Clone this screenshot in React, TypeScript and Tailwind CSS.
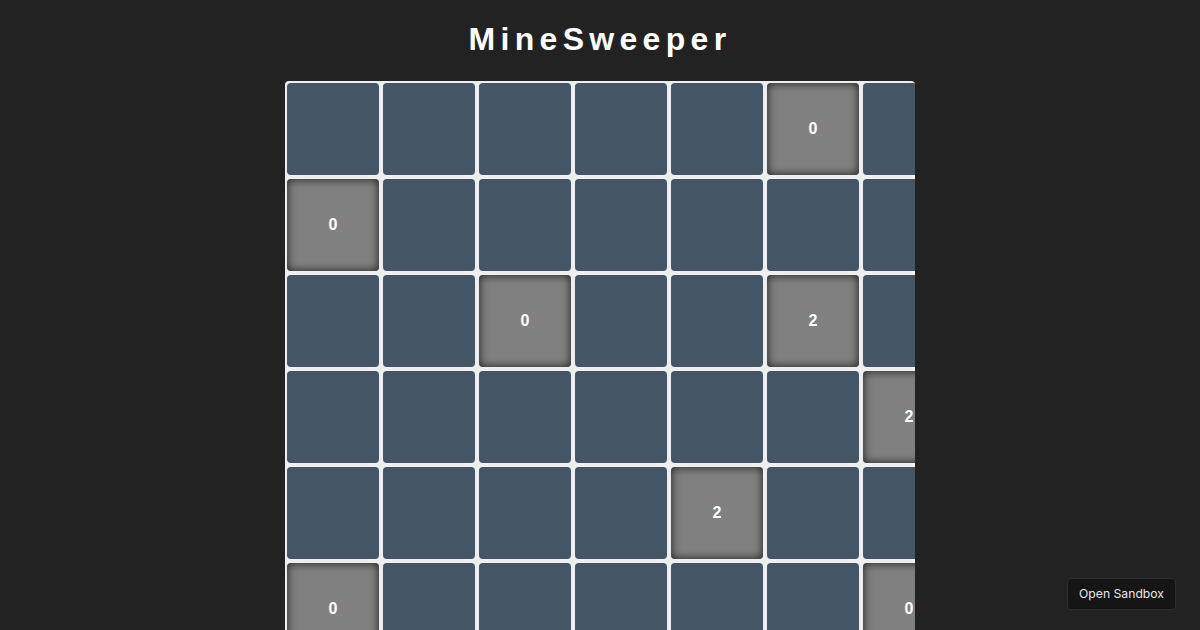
import React from "react";

const revealed: Record<string, string> = {
  "0-5": "0",
  "1-0": "0",
  "2-2": "0",
  "2-5": "2",
  "3-6": "2",
  "4-4": "2",
  "5-0": "0",
  "5-6": "0",
};

export default function App() {
  const rows = Array.from({ length: 10 }, (_, r) => r);
  const cols = Array.from({ length: 10 }, (_, c) => c);
  return (
    <div className="min-h-screen bg-[#222222] flex flex-col items-center overflow-hidden" style={{ height: 630 }}>
      <h1 className="mt-[23px] text-[32px] leading-[32px] font-bold text-white tracking-[5.3px] font-['Liberation_Sans',Arial,sans-serif]">
        MineSweeper
      </h1>
      <div className="mt-[26px] w-[630px] overflow-hidden rounded-[4px] bg-[#eeeeee] shrink-0">
        <div className="grid grid-cols-[repeat(10,96px)] w-max">
          {rows.map((r) =>
            cols.map((c) => {
              const v = revealed[`${r}-${c}`];
              return v !== undefined ? (
                <div
                  key={`${r}-${c}`}
                  className="m-[2px] w-[92px] h-[92px] rounded-[4px] bg-[#808080] shadow-[inset_0_0_10px_rgba(0,0,0,0.8)] flex items-center justify-center text-white font-bold text-[16px] font-['Liberation_Sans',Arial,sans-serif]"
                >
                  {v}
                </div>
              ) : (
                <div key={`${r}-${c}`} className="m-[2px] w-[92px] h-[92px] rounded-[4px] bg-[#445666]" />
              );
            })
          )}
        </div>
      </div>
      <div className="fixed right-[24px] bottom-[20px] h-[32px] px-[11px] flex items-center rounded-[4px] bg-[#151515] border border-[#2e2e2e] text-[#e8e8e8] text-[12.2px] font-['Inter',sans-serif]">
        Open Sandbox
      </div>
    </div>
  );
}
